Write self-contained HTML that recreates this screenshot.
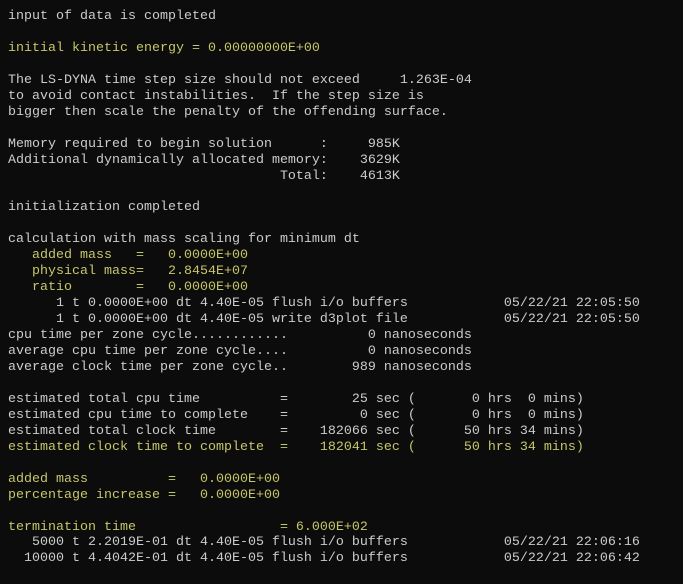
<!DOCTYPE html>
<html><head><meta charset="utf-8"><style>
html,body{margin:0;padding:0;background:#0c0c0c;width:683px;height:584px;overflow:hidden}
pre{margin:0;position:absolute;left:8px;top:9px;font-family:"Liberation Mono",monospace;font-size:13.33px;line-height:15.96px;color:#cccccc;white-space:pre}
.y{color:#c6c66a}
</style></head><body><pre>input of data is completed

<span class="y">initial kinetic energy = 0.00000000E+00</span>

The LS-DYNA time step size should not exceed     1.263E-04
to avoid contact instabilities.  If the step size is
bigger then scale the penalty of the offending surface.

Memory required to begin solution      :     985K
Additional dynamically allocated memory:    3629K
                                  Total:    4613K

initialization completed

calculation with mass scaling for minimum dt
<span class="y">   added mass   =   0.0000E+00</span>
<span class="y">   physical mass=   2.8454E+07</span>
<span class="y">   ratio        =   0.0000E+00</span>
      1 t 0.0000E+00 dt 4.40E-05 flush i/o buffers            05/22/21 22:05:50
      1 t 0.0000E+00 dt 4.40E-05 write d3plot file            05/22/21 22:05:50
cpu time per zone cycle............          0 nanoseconds
average cpu time per zone cycle....          0 nanoseconds
average clock time per zone cycle..        989 nanoseconds

estimated total cpu time          =        25 sec (       0 hrs  0 mins)
estimated cpu time to complete    =         0 sec (       0 hrs  0 mins)
estimated total clock time        =    182066 sec (      50 hrs 34 mins)
<span class="y">estimated clock time to complete  =    182041 sec (      50 hrs 34 mins)</span>

<span class="y">added mass          =   0.0000E+00</span>
<span class="y">percentage increase =   0.0000E+00</span>

<span class="y">termination time                  = 6.000E+02</span>
   5000 t 2.2019E-01 dt 4.40E-05 flush i/o buffers            05/22/21 22:06:16
  10000 t 4.4042E-01 dt 4.40E-05 flush i/o buffers            05/22/21 22:06:42
</pre></body></html>
